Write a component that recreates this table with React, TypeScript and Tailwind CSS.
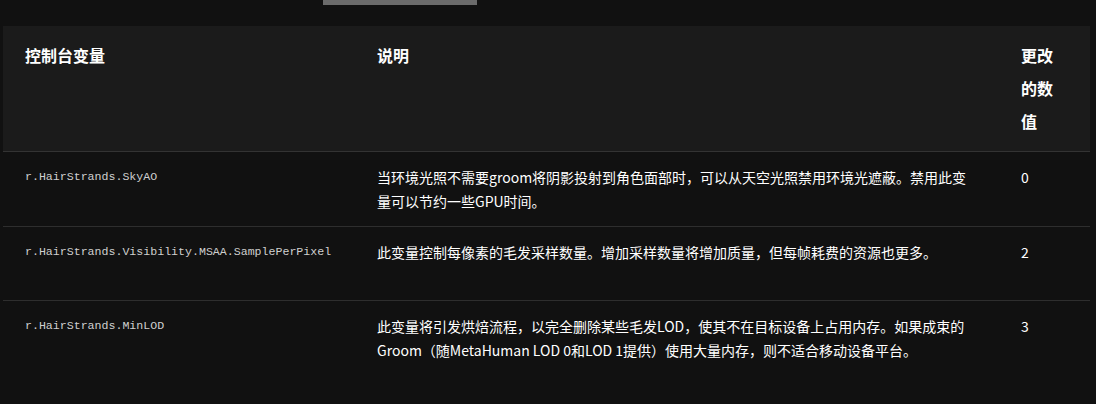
const rows = [
  {
    cvar: "r.HairStrands.SkyAO",
    desc: "当环境光照不需要groom将阴影投射到角色面部时，可以从天空光照禁用环境光遮蔽。禁用此变量可以节约一些GPU时间。",
    value: "0",
  },
  {
    cvar: "r.HairStrands.Visibility.MSAA.SamplePerPixel",
    desc: "此变量控制每像素的毛发采样数量。增加采样数量将增加质量，但每帧耗费的资源也更多。",
    value: "2",
  },
  {
    cvar: "r.HairStrands.MinLOD",
    desc: "此变量将引发烘焙流程，以完全删除某些毛发LOD，使其不在目标设备上占用内存。如果成束的Groom（随MetaHuman LOD 0和LOD 1提供）使用大量内存，则不适合移动设备平台。",
    value: "3",
  },
]

const cjk = "font-['Noto_Sans_CJK_SC','Noto_Sans',sans-serif]"

export default function App() {
  return (
    <div className={`min-h-[404px] w-[1096px] overflow-hidden bg-[#111111] ${cjk}`}>
      <div className="ml-[323px] h-[5px] w-[154px] bg-[#6b6b6b]" />
      <div className="ml-[3px] mt-[21px] w-[1087px]">
        <div className="grid grid-cols-[352px_644px_91px] border-b border-[#333333] bg-[#1b1b1b] text-[16px] font-bold leading-[33px] text-white">
          <div className="px-[22px] py-[13px]">控制台变量</div>
          <div className="px-[22px] py-[13px]">说明</div>
          <div className="px-[22px] py-[13px]">更改的数值</div>
        </div>
        {rows.map((r, i) => (
          <div
            key={r.cvar}
            className={`grid min-h-[74px] grid-cols-[352px_644px_91px] text-[14px] leading-[24px] ${
              i < rows.length - 1 ? "border-b border-[#2e2e2e]" : ""
            }`}
          >
            <div className="px-[22px] py-[13px] font-['Liberation_Mono',monospace] text-[11.6px] text-[#cfcfcf]">
              {r.cvar}
            </div>
            <div className="px-[22px] py-[13px] text-white">{r.desc}</div>
            <div className="px-[22px] py-[13px] text-white">{r.value}</div>
          </div>
        ))}
      </div>
    </div>
  )
}
